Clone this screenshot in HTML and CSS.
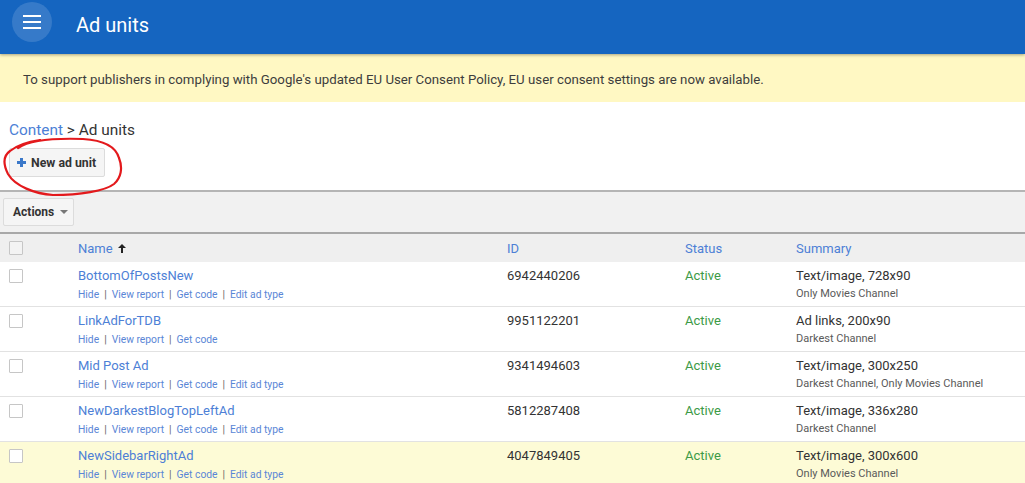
FILE: index.html
```html
<!DOCTYPE html>
<html lang="en">
  <head>
    <meta charset="UTF-8">
    <title>Ad units</title>
    <link rel="stylesheet" href="styles.css">
  </head>
<body>
  <header class="topbar">
    <span class="menu">
      <svg width="18" height="14" viewBox="0 0 18 14">
        <rect y="0" width="18" height="2" fill="#fff"/>
        <rect y="6" width="18" height="2" fill="#fff"/>
        <rect y="12" width="18" height="2" fill="#fff"/>
      </svg>
    </span>
    <h1>Ad units</h1>
  </header>

  <div class="notice">
    To support publishers in complying with Google's updated EU User Consent Policy, EU user consent settings are now available.
  </div>

  <div class="crumbs">
    <a href="#">Content</a> &gt; Ad units
  </div>

  <div class="create">
    <button class="btn btn-new">
      <svg width="9" height="9" viewBox="0 0 9 9">
        <rect x="3" y="0" width="3" height="9" fill="#3b78c9"/>
        <rect x="0" y="3" width="9" height="3" fill="#3b78c9"/>
      </svg>
      New ad unit
    </button>
    <!-- the hand drawn circle from the screenshot -->
    <svg class="scribble" width="130" height="64" viewBox="0 0 130 64">
      <path d="M18 12 C 30 4, 55 2, 83 3 C 100 4, 115 8, 119 22 C 123 32, 121 42, 114 48 C 105 55, 80 59, 53 59 C 35 58, 15 50, 8 38 C 3 28, 3 20, 10 15 C 16 10, 26 6, 40 4"
        fill="none" stroke="#e3191c" stroke-width="2.2" stroke-linecap="round"/>
    </svg>
  </div>

  <div class="toolbar">
    <button class="btn btn-actions">
      Actions
      <svg width="8" height="4" viewBox="0 0 8 4"><path d="M0 0 H8 L4 4 Z" fill="#777"/></svg>
    </button>
  </div>

  <div class="table">
    <div class="row head">
      <span class="check"><i class="box"></i></span>
      <span class="sort">Name
        <svg width="8" height="9" viewBox="0 0 8 9"><path d="M4 0 L8 4 H5 V9 H3 V4 H0 Z" fill="#222"/></svg>
      </span>
      <span>ID</span>
      <span>Status</span>
      <span>Summary</span>
    </div>

    <div class="row">
      <span class="check"><i class="box"></i></span>
      <span>
        <a class="unit" href="#">BottomOfPostsNew</a>
        <span class="links"><a href="#">Hide</a><b>|</b><a href="#">View report</a><b>|</b><a href="#">Get code</a><b>|</b><a href="#">Edit ad type</a></span>
      </span>
      <span class="id">6942440206</span>
      <span class="active">Active</span>
      <span><span class="kind">Text/image, 728x90</span><span class="channel">Only Movies Channel</span></span>
    </div>

    <div class="row">
      <span class="check"><i class="box"></i></span>
      <span>
        <a class="unit" href="#">LinkAdForTDB</a>
        <span class="links"><a href="#">Hide</a><b>|</b><a href="#">View report</a><b>|</b><a href="#">Get code</a></span>
      </span>
      <span class="id">9951122201</span>
      <span class="active">Active</span>
      <span><span class="kind">Ad links, 200x90</span><span class="channel">Darkest Channel</span></span>
    </div>

    <div class="row">
      <span class="check"><i class="box"></i></span>
      <span>
        <a class="unit" href="#">Mid Post Ad</a>
        <span class="links"><a href="#">Hide</a><b>|</b><a href="#">View report</a><b>|</b><a href="#">Get code</a><b>|</b><a href="#">Edit ad type</a></span>
      </span>
      <span class="id">9341494603</span>
      <span class="active">Active</span>
      <span><span class="kind">Text/image, 300x250</span><span class="channel">Darkest Channel, Only Movies Channel</span></span>
    </div>

    <div class="row">
      <span class="check"><i class="box"></i></span>
      <span>
        <a class="unit" href="#">NewDarkestBlogTopLeftAd</a>
        <span class="links"><a href="#">Hide</a><b>|</b><a href="#">View report</a><b>|</b><a href="#">Get code</a><b>|</b><a href="#">Edit ad type</a></span>
      </span>
      <span class="id">5812287408</span>
      <span class="active">Active</span>
      <span><span class="kind">Text/image, 336x280</span><span class="channel">Darkest Channel</span></span>
    </div>

    <div class="row hover">
      <span class="check"><i class="box"></i></span>
      <span>
        <a class="unit" href="#">NewSidebarRightAd</a>
        <span class="links"><a href="#">Hide</a><b>|</b><a href="#">View report</a><b>|</b><a href="#">Get code</a><b>|</b><a href="#">Edit ad type</a></span>
      </span>
      <span class="id">4047849405</span>
      <span class="active">Active</span>
      <span><span class="kind">Text/image, 300x600</span><span class="channel">Only Movies Channel</span></span>
    </div>
  </div>
</body>
</html>
```

FILE: styles.css
```css
body {
  margin: 0;
  font-family: Roboto, "Liberation Sans", Arial, sans-serif;
  color: #333;
  background-color: #fff;
  overflow: hidden;
}
a {
  color: #4d7fd6;
  text-decoration: none;
}
.topbar {
  position: relative;
  z-index: 1;
  height: 54px;
  display: flex;
  align-items: center;
  padding-left: 12px;
  background-color: #1565c0;
  box-shadow: 0 1px 3px rgba(0, 0, 0, 0.35);
}
.menu {
  width: 40px;
  height: 40px;
  margin-top: -10px;
  border-radius: 50%;
  background-color: rgba(255, 255, 255, 0.14);
  display: flex;
  justify-content: center;
  align-items: center;
}
.topbar h1 {
  margin: -5px 0 0 24px;
  font-size: 20px;
  font-weight: 400;
  color: #fff;
}
.notice {
  height: 48px;
  padding: 2px 0 0 23px;
  box-sizing: border-box;
  display: flex;
  align-items: center;
  background-color: #fff8c3;
  font-size: 13.25px;
  color: #3d3d3d;
}
.crumbs {
  padding: 19px 0 0 9px;
  font-size: 15.4px;
  line-height: 18px;
  color: #333;
}
.create {
  position: relative;
  height: 51px;
  padding: 9px 0 0 9px;
  box-sizing: border-box;
}
.btn {
  font-family: inherit;
  font-size: 12px;
  font-weight: 700;
  color: #333;
  background-color: #f5f5f5;
  border: 1px solid #dcdcdc;
  border-radius: 2px;
  display: inline-flex;
  align-items: center;
  gap: 5px;
  cursor: pointer;
}
.btn-new {
  height: 29px;
  padding: 0 8px 0 7px;
  font-size: 12.3px;
}
.scribble {
  position: absolute;
  left: 0;
  top: -3px;
}
.toolbar {
  border-top: 2px solid #b5b5b5;
  background-color: #f1f1f1;
  height: 42px;
  padding: 6px 0 0 3px;
  box-sizing: border-box;
}
.btn-actions {
  height: 28px;
  padding: 0 5px 0 9px;
  gap: 6px;
  font-weight: 700;
}
.table {
  border-top: 2px solid #a8a8a8;
}
.row {
  display: grid;
  grid-template-columns: 78px 429px 178px 111px 1fr;
  height: 45px;
  box-sizing: border-box;
  border-bottom: 1px solid #e2e2e2;
  font-size: 13px;
}
.row > span {
  padding-top: 6px;
}
.row.head {
  height: 28px;
  border-bottom: 0;
  background-color: #efefef;
  color: #4d7fd6;
}
.row.head > span {
  padding-top: 7px;
}
.row.hover {
  background-color: #fdfbd6;
  border-bottom: 0;
}
.check {
  padding-left: 9px;
}
.box {
  display: block;
  width: 12px;
  height: 12px;
  border: 1px solid #c6c6c6;
  background-color: #fff;
  border-radius: 1px;
}
.head .box {
  background-color: #f3f3f3;
}
.row:not(.head) .check {
  padding-top: 7px;
}
.sort svg {
  margin-left: 2px;
}
.unit {
  display: block;
  font-size: 13px;
  line-height: 16px;
}
.links {
  display: block;
  margin-top: 4px;
  font-size: 10.3px;
}
.links a {
  color: #5a86d6;
}
.links b {
  font-weight: 400;
  color: #666;
  margin: 0 5px;
}
.id {
  color: #333;
  line-height: 16px;
}
.active {
  color: #3c9a46;
  line-height: 16px;
}
.kind {
  display: block;
  line-height: 16px;
  color: #333;
}
.channel {
  display: block;
  margin-top: 3px;
  font-size: 11px;
  color: #5a5a5a;
}
```
